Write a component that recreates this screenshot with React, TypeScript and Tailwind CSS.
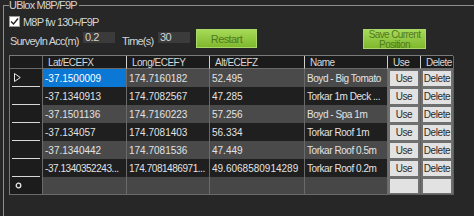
import React from 'react';

type Row = { lat: string; long: string; alt: string; name: string };

const ROWS: Row[] = [
  { lat: '-37.1500009', long: '174.7160182', alt: '52.495', name: 'Boyd - Big Tomato' },
  { lat: '-37.1340913', long: '174.7082567', alt: '47.285', name: 'Torkar 1m Deck ...' },
  { lat: '-37.1501136', long: '174.7160223', alt: '57.256', name: 'Boyd - Spa 1m' },
  { lat: '-37.134057', long: '174.7081403', alt: '56.334', name: 'Torkar Roof 1m' },
  { lat: '-37.1340442', long: '174.7081536', alt: '47.449', name: 'Torkar Roof 0.5m' },
  { lat: '-37.1340352243...', long: '174.7081486971...', alt: '49.6068580914289', name: 'Torkar Roof 0.2m' },
];

const COLS = 'grid grid-cols-[33px_84px_83px_95px_83px_33px_33px]';

function GreenButton({ children, className }: { children: React.ReactNode; className: string }) {
  return (
    <div
      className={`flex flex-col items-center justify-center border border-[#a9d86a] bg-gradient-to-b from-[#a6d957] to-[#7fb82c] text-[#4f7a22] tracking-[-0.6px] ${className}`}
    >
      {children}
    </div>
  );
}

function LightButton({ label }: { label?: string }) {
  return (
    <div className="border-r border-b border-[#5e5e5e] bg-[#6f6f6f] p-[2px] pb-[1px]">
      <div className="h-full flex items-center justify-center overflow-hidden bg-[#e2e2e2] text-[#2a2a2a] text-[10px] tracking-[-0.4px]">
        {label}
      </div>
    </div>
  );
}

function DataRow({ row, index }: { row: Row; index: number }) {
  const light = index % 2 === 0;
  const bg = light ? 'bg-[#4a4a4a]' : 'bg-[#1f1f1f]';
  const cell = `border-r border-b border-[#6a6a6a] px-[2px] flex items-center whitespace-nowrap overflow-hidden text-[10px] text-[#e2e2e2] ${bg}`;
  const squeeze = (v: string) => (v.endsWith('...') ? 'tracking-[-0.45px]' : '');
  return (
    <div className={`${COLS} h-[18px]`}>
      <div className="border-r border-[#6a6a6a] bg-[#1c1c1c] flex flex-col">
        <div className="flex-1 flex items-center pl-[4px]">
          {index === 0 && (
            <svg width="7" height="9" viewBox="0 0 7 9">
              <polygon points="0.5,0.5 6.3,4.5 0.5,8.5" fill="none" stroke="#e6e6e6" strokeWidth="1" />
            </svg>
          )}
        </div>
        <div className="h-[1px] mx-[2px] bg-[#d8d8d8]" />
        <div className="h-[1px] bg-[#6a6a6a]" />
      </div>
      <div className={index === 0 ? `${cell} !bg-[#0c78d6] text-white` : `${cell} ${squeeze(row.lat)}`}>{row.lat}</div>
      <div className={`${cell} ${squeeze(row.long)}`}>{row.long}</div>
      <div className={cell}>{row.alt}</div>
      <div className={`${cell} tracking-[-0.45px]`}>{row.name}</div>
      <LightButton label="Use" />
      <LightButton label="Delete" />
    </div>
  );
}

export default function App() {
  const head = 'border-r border-b border-[#6a6a6a] pl-[5px] flex items-center whitespace-nowrap overflow-hidden text-[10px] tracking-[-0.5px] text-[#d8d8d8] bg-[#1b1b1b]';
  const newCell = 'border-r border-b border-[#6a6a6a] bg-[#474747]';

  return (
    <div className="w-[474px] h-[216px] bg-[#272727] overflow-hidden font-['Liberation_Sans',Arial,sans-serif] text-[#d4d4d4]">
      <div className="pt-[5px] pl-[3px] h-full">
        <div className="relative h-full border-t border-l border-[#8e8e8e]">
          <span className="absolute -top-[7px] left-[5px] bg-[#272727] pr-[2px] text-[11px] leading-[12px] tracking-[-0.8px]">
            UBlox M8P/F9P
          </span>

          <div className="pl-[5px]">
            {/* checkbox */}
            <div className="mt-[10px] h-[11px] flex items-center gap-[3px]">
              <div className="w-[11px] h-[11px] bg-white border border-[#9a9a9a] flex items-center justify-center">
                <svg width="9" height="9" viewBox="0 0 9 9">
                  <polyline points="1,4.5 3.5,7 8,1.5" fill="none" stroke="#222" strokeWidth="1.4" />
                </svg>
              </div>
              <span className="text-[11px] leading-[12px] tracking-[-0.8px]">M8P fw 130+/F9P</span>
            </div>

            {/* survey-in controls */}
            <div className="mt-[2px] h-[20px] flex items-start">
              <span className="w-[74px] pl-[1px] mt-[6px] text-[11px] leading-[12px] tracking-[-0.8px]">SurveyIn Acc(m)</span>
              <div className="w-[32px] h-[11px] mt-[3px] bg-[#3b3b3b] pl-[2px] text-[11px] leading-[10px] tracking-[-0.5px]">0.2</div>
              <span className="w-[36px] ml-[7px] mt-[6px] text-[11px] leading-[12px] tracking-[-0.8px]">Time(s)</span>
              <div className="w-[32px] h-[11px] mt-[3px] bg-[#3b3b3b] pl-[2px] text-[11px] leading-[10px] tracking-[-0.5px]">30</div>
              <GreenButton className="ml-[6px] w-[61px] h-[19px] text-[11px] leading-[12px]">Restart</GreenButton>
              <GreenButton className="ml-[106px] w-[63px] h-[20px] text-[10px] leading-[9px]">
                <span className="leading-[10px]">Save Current</span>
                <span className="leading-[9px]">Position</span>
              </GreenButton>
            </div>

            {/* data grid */}
            <div className="mt-[6px] w-[444px] border-t border-l border-[#7a7a7a]">
              <div className={`${COLS} h-[13px]`}>
                <div className="border-r border-b border-[#6a6a6a] bg-[#1b1b1b]" />
                <div className={head}>Lat/ECEFX</div>
                <div className={`${head} border-l border-l-[#cfcfcf] -ml-px`}>Long/ECEFY</div>
                <div className={`${head} border-l border-l-[#cfcfcf] -ml-px`}>Alt/ECEFZ</div>
                <div className={`${head} border-l border-l-[#cfcfcf] -ml-px`}>Name</div>
                <div className={`${head} border-l border-l-[#cfcfcf] -ml-px`}>Use</div>
                <div className={`${head} border-l border-l-[#cfcfcf] -ml-px`}>Delete</div>
              </div>

              {ROWS.map((r, i) => (
                <DataRow key={i} row={r} index={i} />
              ))}

              <div className={`${COLS} h-[18px]`}>
                <div className="border-r border-b border-[#6a6a6a] bg-[#1c1c1c] flex items-center pl-[5px]">
                  <svg width="7" height="7" viewBox="0 0 7 7">
                    <circle cx="3.5" cy="3.5" r="2.3" fill="none" stroke="#e6e6e6" strokeWidth="1.3" />
                  </svg>
                </div>
                <div className={newCell} />
                <div className={newCell} />
                <div className={newCell} />
                <div className={newCell} />
                <LightButton />
                <LightButton />
              </div>
            </div>
          </div>
        </div>
      </div>
    </div>
  );
}
